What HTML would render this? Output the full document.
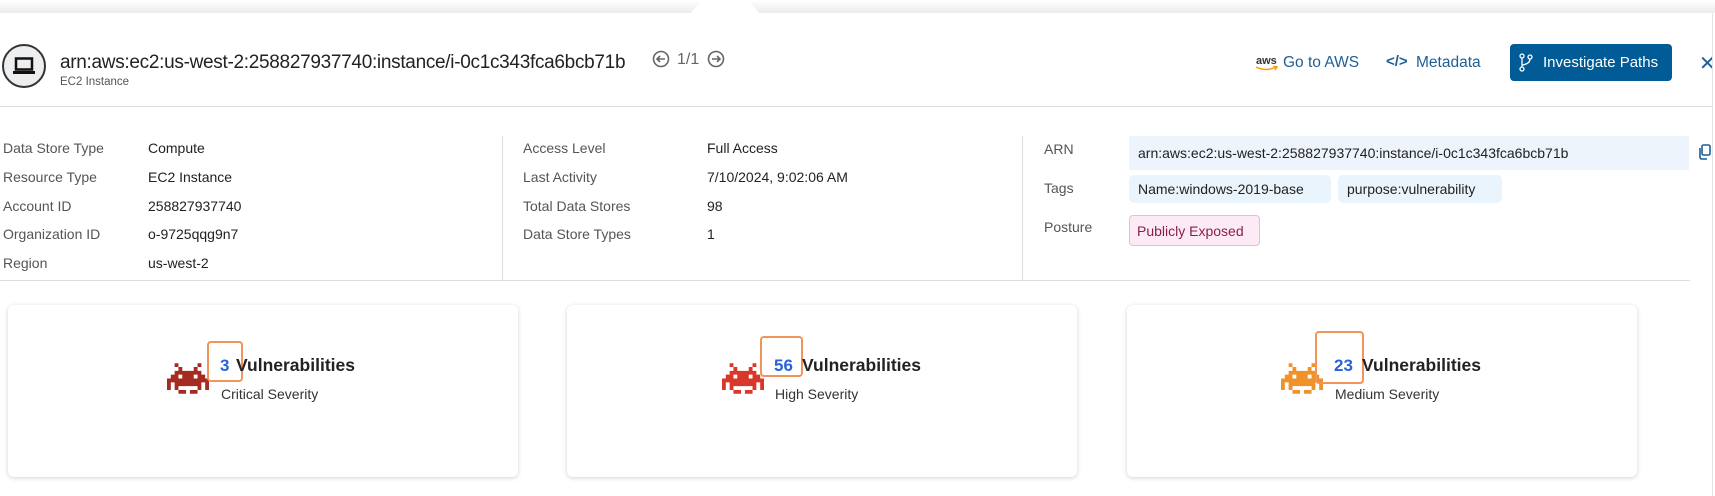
<!DOCTYPE html>
<html><head><meta charset="utf-8"><style>
*{margin:0;padding:0;box-sizing:border-box}
body{width:1715px;height:496px;background:#fff;font-family:"Liberation Sans",sans-serif;position:relative;overflow:hidden;color:#222}
.a{position:absolute;white-space:nowrap}
.lbl{color:#555;font-size:14px}
.val{color:#222;font-size:14px}
.card{position:absolute;top:305px;width:510px;height:172px;background:#fff;border-radius:6px;box-shadow:0 1px 5px rgba(0,0,0,.18)}
.nb{position:absolute;border:2px solid #f0945a;border-radius:4px;width:36px;height:41px}
.num{color:#2a62d8;font-size:17px;font-weight:bold}
.vt{font-size:17.5px;font-weight:bold;color:#222}
.sub{font-size:14px;color:#333}
</style></head><body>
<div class="a" style="left:0;top:0;width:1715px;height:13px;background:linear-gradient(#fff,#ececec)"></div>
<svg class="a" style="left:690px;top:0" width="70" height="14"><polygon points="0,14 12,0 58,0 70,14" fill="#fff"/></svg>
<div class="a" style="left:2px;top:44px;width:44px;height:44px;border-radius:50%;border:2px solid #333;background:#eceef0"></div>
<svg class="a" style="left:13px;top:57px" width="22" height="18"><rect x="3" y="1.5" width="16" height="11" fill="none" stroke="#111" stroke-width="2.5"/><rect x="0" y="14" width="22" height="3" fill="#111"/></svg>
<div class="a" style="left:60px;top:52px;font-size:19px;color:#222;letter-spacing:-0.3px">arn:aws:ec2:us-west-2:258827937740:instance/i-0c1c343fca6bcb71b</div>
<div class="a" style="left:60px;top:76px;font-size:11.5px;color:#555">EC2 Instance</div>
<svg class="a" style="left:652px;top:50px" width="80" height="20"><circle cx="9" cy="9" r="7.5" fill="none" stroke="#666" stroke-width="1.6"/><path d="M13 9H5M8 6L5 9L8 12" fill="none" stroke="#666" stroke-width="1.6"/><circle cx="64" cy="9" r="7.5" fill="none" stroke="#666" stroke-width="1.6"/><path d="M60 9H68M65 6L68 9L65 12" fill="none" stroke="#666" stroke-width="1.6"/></svg>
<div class="a" style="left:677px;top:51px;font-size:16px;color:#666">1/1</div>
<div class="a" style="left:1256px;top:55px;font-size:11px;font-weight:bold;color:#333">aws</div>
<svg class="a" style="left:1255px;top:66px" width="24" height="6"><path d="M1 1Q11 6 21 1M18 0L22 1L20 4" fill="none" stroke="#f90" stroke-width="1.5"/></svg>
<div class="a" style="left:1283px;top:54px;font-size:15.5px;color:#1f5f95">Go to AWS</div>
<div class="a" style="left:1386px;top:53px;font-size:15px;color:#1f5f95;font-weight:bold">&lt;/&gt;</div>
<div class="a" style="left:1416px;top:54px;font-size:15.5px;color:#1f5f95">Metadata</div>
<div class="a" style="left:1510px;top:44px;width:162px;height:37px;background:#005b96;border-radius:4px"></div>
<svg class="a" style="left:1518px;top:53px" width="16" height="20"><circle cx="4" cy="3" r="2" fill="none" stroke="#fff" stroke-width="1.3"/><circle cx="4" cy="16" r="2" fill="none" stroke="#fff" stroke-width="1.3"/><circle cx="12" cy="4" r="2" fill="none" stroke="#fff" stroke-width="1.3"/><path d="M4 5V14M12 6Q12 11 4 12" fill="none" stroke="#fff" stroke-width="1.3"/></svg>
<div class="a" style="left:1543px;top:54px;font-size:15px;color:#fff">Investigate Paths</div>
<div class="a" style="left:1699px;top:51px;font-size:20px;color:#1f5f95">✕</div>
<div class="a" style="left:0;top:106px;width:1712px;height:1px;background:#ddd"></div>
<div class="a" style="left:1712px;top:13px;width:1px;height:483px;background:#e3e3e3"></div>

<div class="a lbl" style="left:3px;top:140px">Data Store Type</div><div class="a val" style="left:148px;top:140px">Compute</div>
<div class="a lbl" style="left:3px;top:169px">Resource Type</div><div class="a val" style="left:148px;top:169px">EC2 Instance</div>
<div class="a lbl" style="left:3px;top:198px">Account ID</div><div class="a val" style="left:148px;top:198px">258827937740</div>
<div class="a lbl" style="left:3px;top:226px">Organization ID</div><div class="a val" style="left:148px;top:226px">o-9725qqg9n7</div>
<div class="a lbl" style="left:3px;top:255px">Region</div><div class="a val" style="left:148px;top:255px">us-west-2</div>
<div class="a" style="left:502px;top:136px;width:1px;height:144px;background:#ddd"></div>
<div class="a lbl" style="left:523px;top:140px">Access Level</div><div class="a val" style="left:707px;top:140px">Full Access</div>
<div class="a lbl" style="left:523px;top:169px">Last Activity</div><div class="a val" style="left:707px;top:169px">7/10/2024, 9:02:06 AM</div>
<div class="a lbl" style="left:523px;top:198px">Total Data Stores</div><div class="a val" style="left:707px;top:198px">98</div>
<div class="a lbl" style="left:523px;top:226px">Data Store Types</div><div class="a val" style="left:707px;top:226px">1</div>
<div class="a" style="left:1022px;top:136px;width:1px;height:144px;background:#ddd"></div>
<div class="a lbl" style="left:1044px;top:141px">ARN</div>
<div class="a val" style="left:1129px;top:136px;width:560px;height:34px;background:#eef4fc;padding:9px 0 0 9px">arn:aws:ec2:us-west-2:258827937740:instance/i-0c1c343fca6bcb71b</div>
<svg class="a" style="left:1698px;top:144px" width="14" height="16"><rect x="4" y="1" width="8" height="10" rx="1.5" fill="none" stroke="#1f5f95" stroke-width="1.6"/><path d="M2 4V13Q2 15 4 15H9" fill="none" stroke="#1f5f95" stroke-width="1.6"/></svg>
<div class="a lbl" style="left:1044px;top:180px">Tags</div>
<div class="a val" style="left:1129px;top:175px;width:202px;height:28px;background:#eaf4fc;border-radius:5px;padding:6px 0 0 9px">Name:windows-2019-base</div>
<div class="a val" style="left:1338px;top:175px;width:164px;height:28px;background:#eaf4fc;border-radius:5px;padding:6px 0 0 9px">purpose:vulnerability</div>
<div class="a lbl" style="left:1044px;top:219px">Posture</div>
<div class="a" style="left:1129px;top:215px;width:131px;height:31px;background:#fcebf4;border:1px solid #f3b7d2;border-radius:4px;padding:7px 0 0 7px;font-size:14px;color:#8a1f4c">Publicly Exposed</div>
<div class="a" style="left:0;top:280px;width:1690px;height:1px;background:#ddd"></div>

<svg width="0" height="0" style="position:absolute"><defs><g id="inv"><path d="M2 0h1v1h-1zM8 0h1v1h-1zM3 1h1v1h-1zM7 1h1v1h-1zM2 2h7v1h-7zM1 3h2v1h-2zM4 3h3v1h-3zM8 3h2v1h-2zM0 4h11v1h-11zM0 5h1v1h-1zM2 5h7v1h-7zM10 5h1v1h-1zM0 6h1v1h-1zM2 6h1v1h-1zM8 6h1v1h-1zM10 6h1v1h-1zM3 7h2v1h-2zM6 7h2v1h-2z"/></g></defs></svg>

<div class="card" style="left:8px"></div>
<svg class="a" style="left:167px;top:362px" width="42" height="33" viewBox="0 0 11 8"><use href="#inv" fill="#a52a1f"/></svg>
<div class="nb" style="left:207px;top:341px"></div>
<div class="a num" style="left:220px;top:356px">3</div>
<div class="a vt" style="left:236px;top:355px">Vulnerabilities</div>
<div class="a sub" style="left:221px;top:386px">Critical Severity</div>

<div class="card" style="left:567px"></div>
<svg class="a" style="left:722px;top:362px" width="42" height="33" viewBox="0 0 11 8"><use href="#inv" fill="#d9372a"/></svg>
<div class="nb" style="left:760px;top:336px;width:43px"></div>
<div class="a num" style="left:774px;top:356px">56</div>
<div class="a vt" style="left:802px;top:355px">Vulnerabilities</div>
<div class="a sub" style="left:775px;top:386px">High Severity</div>

<div class="card" style="left:1127px"></div>
<svg class="a" style="left:1281px;top:362px" width="42" height="33" viewBox="0 0 11 8"><use href="#inv" fill="#f0922a"/></svg>
<div class="nb" style="left:1315px;top:331px;width:49px;height:53px"></div>
<div class="a num" style="left:1334px;top:356px">23</div>
<div class="a vt" style="left:1362px;top:355px">Vulnerabilities</div>
<div class="a sub" style="left:1335px;top:386px">Medium Severity</div>
</body></html>
